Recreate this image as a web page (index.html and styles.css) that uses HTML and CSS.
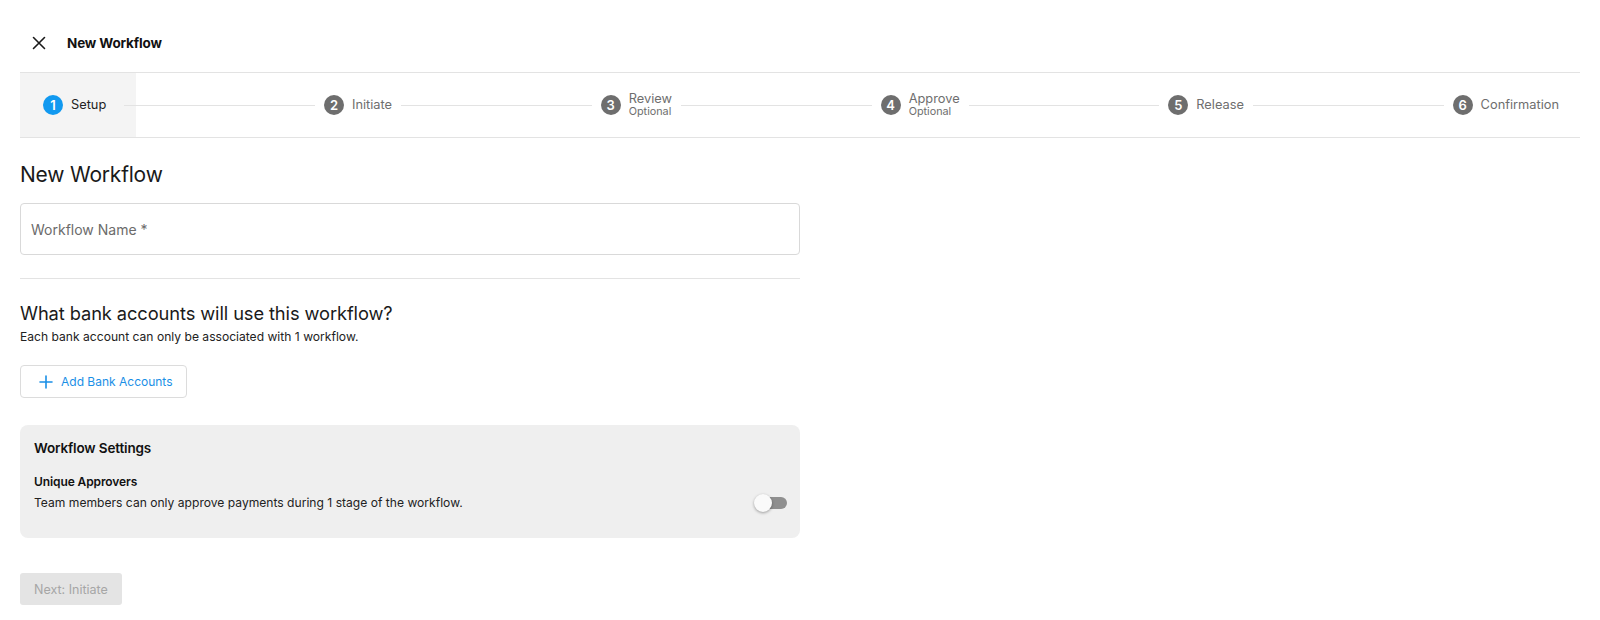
FILE: index.html
```html
<!DOCTYPE html>
<html lang="en">
<head>
<meta charset="utf-8">
<title>New Workflow</title>
<link rel="stylesheet" href="styles.css">
</head>
<body>
<div class="page">
  <header class="topbar">
    <button class="close-btn" aria-label="Close">
      <svg width="14" height="14" viewBox="0 0 14 14"><path d="M1.5 1.5L12.5 12.5M12.5 1.5L1.5 12.5" stroke="#1a1a1a" stroke-width="1.6" stroke-linecap="round"/></svg>
    </button>
    <span class="topbar-title">New Workflow</span>
  </header>

  <nav class="stepper">
    <div class="step step-active">
      <span class="step-num">1</span>
      <span class="step-label">Setup</span>
    </div>
    <div class="connector connector-first"></div>
    <div class="step">
      <span class="step-num">2</span>
      <span class="step-label">Initiate</span>
    </div>
    <div class="connector"></div>
    <div class="step">
      <span class="step-num">3</span>
      <span class="step-text"><span class="step-label">Review</span><span class="step-sub">Optional</span></span>
    </div>
    <div class="connector"></div>
    <div class="step">
      <span class="step-num">4</span>
      <span class="step-text"><span class="step-label">Approve</span><span class="step-sub">Optional</span></span>
    </div>
    <div class="connector"></div>
    <div class="step">
      <span class="step-num">5</span>
      <span class="step-label">Release</span>
    </div>
    <div class="connector"></div>
    <div class="step">
      <span class="step-num">6</span>
      <span class="step-label">Confirmation</span>
    </div>
  </nav>

  <main class="form">
    <h1 class="form-title">New Workflow</h1>
    <div class="field">
      <span class="field-placeholder">Workflow Name *</span>
    </div>
    <hr class="divider">
    <h2 class="section-title">What bank accounts will use this workflow?</h2>
    <p class="section-sub">Each bank account can only be associated with 1 workflow.</p>
    <button class="add-btn">
      <svg width="14" height="14" viewBox="0 0 14 14"><path d="M7 1V13M1 7H13" stroke="#1a8fe6" stroke-width="1.6" stroke-linecap="round"/></svg>
      <span>Add Bank Accounts</span>
    </button>

    <section class="settings">
      <h3 class="settings-title">Workflow Settings</h3>
      <div class="setting-row">
        <div class="setting-text">
          <div class="setting-name">Unique Approvers</div>
          <div class="setting-desc">Team members can only approve payments during 1 stage of the workflow.</div>
        </div>
        <div class="toggle">
          <span class="toggle-track"></span>
          <span class="toggle-knob"></span>
        </div>
      </div>
    </section>

    <button class="next-btn" disabled>Next: Initiate</button>
  </main>
</div>
</body>
</html>
```

FILE: styles.css
```css
* { box-sizing: border-box; }

html, body {
  margin: 0;
  padding: 0;
  background: #ffffff;
}

body {
  font-family: Inter, "Noto Sans", "Liberation Sans", sans-serif;
  color: #1a1a1a;
  -webkit-font-smoothing: antialiased;
}

.page {
  padding: 0 20px;
}

/* Top bar */
.topbar {
  height: 72px;
  padding-top: 14px;
  display: flex;
  align-items: center;
}

.close-btn {
  border: 0;
  background: none;
  padding: 0;
  margin-left: 12px;
  width: 14px;
  height: 14px;
  display: flex;
  cursor: pointer;
}

.topbar-title {
  margin-left: 21px;
  font-size: 13.5px;
  font-weight: 700;
  letter-spacing: -0.15px;
  color: #111;
}

/* Stepper */
.stepper {
  height: 66px;
  border-top: 1px solid #e3e3e3;
  border-bottom: 1px solid #e3e3e3;
  display: flex;
  align-items: center;
  padding-right: 21px;
}

.step {
  display: flex;
  align-items: center;
  gap: 8px;
  height: 100%;
  flex: none;
}

.step-active {
  background: #f4f4f4;
  padding: 0 30px 0 23px;
}

.step-num {
  width: 20px;
  height: 20px;
  border-radius: 50%;
  background: #6e6e6e;
  color: #fff;
  font-size: 13px;
  font-weight: 600;
  display: flex;
  align-items: center;
  justify-content: center;
  flex: none;
}

.step-active .step-num {
  background: #1199f0;
}

.step-label {
  font-size: 12.8px;
  color: #6e6e6e;
  line-height: 14px;
}

.step-active .step-label {
  color: #222;
}

.step-text {
  display: flex;
  flex-direction: column;
}

.step-sub {
  font-size: 10.8px;
  color: #6e6e6e;
  line-height: 12px;
}

.connector {
  flex: 1;
  height: 1px;
  background: #e3e3e3;
  margin: 0 9px;
  position: relative;
}

.connector-first {
  margin-left: -12px;
}

/* Form */
.form {
  width: 780px;
}

.form-title {
  margin: 23px 0 14px;
  font-size: 21px;
  line-height: 28px;
  font-weight: 400;
  letter-spacing: -0.2px;
  color: #1a1a1a;
}

.field {
  height: 52px;
  border: 1px solid #d9d9d9;
  border-radius: 4px;
  display: flex;
  align-items: center;
  padding-left: 10px;
}

.field-placeholder {
  font-size: 14px;
  color: #6b6b6b;
}

.divider {
  margin: 23px 0 0;
  border: 0;
  height: 1px;
  background: #e3e3e3;
}

.section-title {
  margin: 22px 0 0;
  font-size: 18.3px;
  line-height: 24px;
  font-weight: 400;
  letter-spacing: -0.1px;
  color: #1a1a1a;
}

.section-sub {
  margin: 4px 0 0;
  font-size: 12.1px;
  line-height: 16px;
  color: #222;
}

.add-btn {
  margin-top: 20px;
  height: 33px;
  width: 167px;
  border: 1px solid #dcdcdc;
  border-radius: 4px;
  background: #fff;
  display: flex;
  align-items: center;
  gap: 8px;
  padding: 0 0 0 18px;
  font-family: inherit;
  font-size: 12px;
  color: #1a8fe6;
  cursor: pointer;
}

.settings {
  margin-top: 27px;
  height: 113px;
  background: #efefef;
  border-radius: 8px;
  padding: 13px 14px 0;
}

.settings-title {
  margin: 0;
  font-size: 13.5px;
  line-height: 20px;
  font-weight: 600;
  letter-spacing: -0.15px;
  color: #111;
}

.setting-row {
  margin-top: 15px;
  display: flex;
  align-items: flex-end;
  justify-content: space-between;
}

.setting-name {
  font-size: 12px;
  line-height: 18px;
  font-weight: 600;
  letter-spacing: -0.1px;
  color: #111;
}

.setting-desc {
  margin-top: 3px;
  font-size: 12.1px;
  line-height: 18px;
  color: #222;
}

.toggle {
  position: relative;
  width: 33px;
  height: 18px;
  margin-right: -1px;
}

.toggle-track {
  position: absolute;
  left: 4px;
  right: 0;
  top: 3px;
  height: 12px;
  border-radius: 6px;
  background: #8f8f8f;
}

.toggle-knob {
  position: absolute;
  left: 0;
  top: 0;
  width: 18px;
  height: 18px;
  border-radius: 50%;
  background: #fafafa;
  box-shadow: 0 1px 3px rgba(0,0,0,0.35);
}

.next-btn {
  margin-top: 35px;
  height: 32px;
  width: 102px;
  border: 0;
  border-radius: 3px;
  background: #e4e4e4;
  color: #a6a6a6;
  font-family: inherit;
  font-size: 12.5px;
  text-align: left;
  padding: 0 0 0 14px;
}
```
